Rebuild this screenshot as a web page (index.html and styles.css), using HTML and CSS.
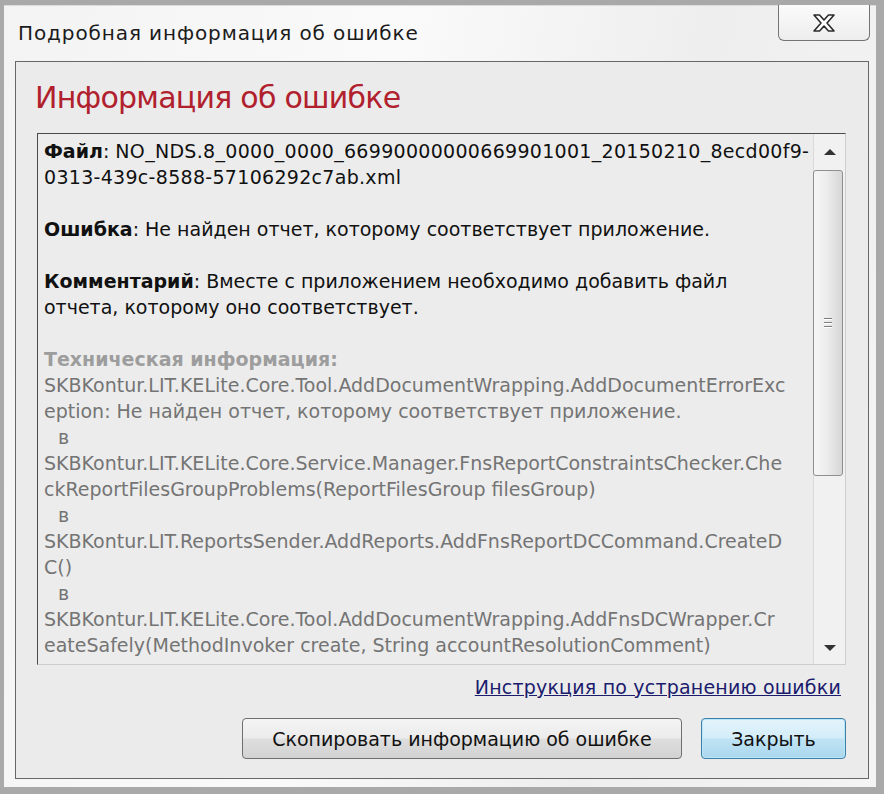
FILE: index.html
```html
<!DOCTYPE html>
<html lang="ru">
   <head>
      <meta charset="utf-8">
      <title>Подробная информация об ошибке</title>
      <link rel="stylesheet" href="styles.css">
   </head>
   <body>
      <div class="window">
      	<div class="titlebar">
      		<span class="title">Подробная информация об ошибке</span>
      		<button class="close" type="button" aria-label="Закрыть">
      			<svg width="24" height="20" viewBox="0 0 24 20">
      				<polygon points="2,2 7.5,2 12,7 16.5,2 22,2 15,10 22,18 16.5,18 12,13 7.5,18 2,18 9,10" fill="#fff" stroke="#2b2b2b" stroke-width="1.6" stroke-linejoin="round"/>
      			</svg>
      		</button>
      	</div>

      	<div class="client">
      		<h1 class="heading">Информация об ошибке</h1>

      		<div class="details">
      			<div class="details-text">
      				<p><b>Файл</b>: <span class="file">NO_NDS.8_0000_0000_66990000000669901001_20150210_8ecd00f9-</span><br><span class="file">0313-439c-8588-57106292c7ab.xml</span></p>
      				<p><b>Ошибка</b>: Не найден отчет, которому соответствует приложение.</p>
      				<p><b>Комментарий</b>: Вместе с приложением необходимо добавить файл<br>отчета, которому оно соответствует.</p>
      				<div class="tech">
      					<b>Техническая информация:</b><br>
      					SKBKontur.LIT.KELite.Core.Tool.AddDocumentWrapping.AddDocumentErrorExc<br>
      					eption: Не найден отчет, которому соответствует приложение.<br>
      					<span class="at">в</span><br>
      					SKBKontur.LIT.KELite.Core.Service.Manager.FnsReportConstraintsChecker.Che<br>
      					ckReportFilesGroupProblems(ReportFilesGroup filesGroup)<br>
      					<span class="at">в</span><br>
      					SKBKontur.LIT.ReportsSender.AddReports.AddFnsReportDCCommand.CreateD<br>
      					C()<br>
      					<span class="at">в</span><br>
      					SKBKontur.LIT.KELite.Core.Tool.AddDocumentWrapping.AddFnsDCWrapper.Cr<br>
      					eateSafely(MethodInvoker create, String accountResolutionComment)
      				</div>
      			</div>

      			<div class="scrollbar">
      				<div class="arrow up"></div>
      				<div class="track">
      					<div class="thumb"><span></span><span></span><span></span></div>
      				</div>
      				<div class="arrow down"></div>
      			</div>
      		</div>

      		<div class="help">
      			<a href="#">Инструкция по устранению ошибки</a>
      		</div>

      		<div class="actions">
      			<button class="btn copy" type="button">Скопировать информацию об ошибке</button>
      			<button class="btn default" type="button">Закрыть</button>
      		</div>
      	</div>
      </div>
   </body>
</html>
```

FILE: styles.css
```css
*{
	box-sizing:border-box;
}
body{
	margin:0;
	padding:5px 8px 7px 4px;
	height:794px;
	background:#a9a9a9;
	font-family:"DejaVu Sans", sans-serif;
	overflow:hidden;
}
.window{
	height:100%;
	display:flex;
	flex-direction:column;
	padding:0 7px 8px 11px;
	background:linear-gradient(100deg, #f3f3f3 0%, #fafafa 40%, #eeeeee 70%, #f4f4f4 100%);
	border-top:1px solid #dcdcdc;
}
.titlebar{
	height:55px;
	display:flex;
	justify-content:space-between;
	align-items:flex-start;
	flex-shrink:0;
}
.title{
	padding:15px 0 0 3px;
	font-size:20px;
	line-height:24px;
	color:#1b1b1b;
	letter-spacing:0.9px;
}
.close{
	width:92px;
	height:36px;
	margin:-1px -1px 0 0;
	padding:0;
	display:flex;
	align-items:center;
	justify-content:center;
	border:1px solid #747474;
	border-top:none;
	border-radius:0 0 6px 6px;
	background:linear-gradient(#fbfbfb, #ededed);
}
.client{
	flex:1;
	display:flex;
	flex-direction:column;
	padding:0 22px 0 21px;
	border:1px solid #676767;
	background:#ebebeb;
}
.heading{
	margin:0 0 17px -2px;
	padding-top:18px;
	font-size:30px;
	line-height:36px;
	font-weight:normal;
	color:#b1202d;
	letter-spacing:-0.75px;
}
.details{
	height:532px;
	display:flex;
	border-top:1px solid #4a4a4a;
	border-left:1px solid #4a4a4a;
	border-right:1px solid #cdcdcd;
	border-bottom:1px solid #cdcdcd;
	background:#ececec;
}
.details-text{
	flex:1;
	padding:4px 0 0 6px;
	overflow:hidden;
	white-space:nowrap;
	font-size:19px;
	line-height:26px;
	color:#111;
}
.details-text p{
	margin:0 0 26px;
}
.details-text b{
	font-weight:bold;
}
.file{
	letter-spacing:0.3px;
}
.tech{
	color:#747474;
}
.tech b{
	color:#9d9d9d;
}
.at{
	padding-left:14px;
}
.scrollbar{
	width:32px;
	display:flex;
	flex-direction:column;
	border-left:1px solid #dadada;
	background:#f1f1f1;
}
.arrow{
	height:36px;
	display:flex;
	align-items:center;
	justify-content:center;
}
.arrow:after{
	content:'';
	border-left:6px solid transparent;
	border-right:6px solid transparent;
}
.up:after{
	border-bottom:6px solid #333;
}
.down{
	height:32px;
}
.down:after{
	border-top:6px solid #333;
}
.track{
	flex:1;
}
.thumb{
	width:30px;
	height:306px;
	display:flex;
	flex-direction:column;
	align-items:center;
	justify-content:center;
	gap:2px;
	border:1px solid #8f8f8f;
	border-radius:3px;
	background:linear-gradient(90deg, #f7f7f7 0%, #ededed 45%, #d6d6d6 100%);
	margin-left:-1px;
}
.thumb span{
	width:8px;
	height:2px;
	background:#7d7d7d;
	border-bottom:1px solid #fff;
}
.help{
	padding:10px 5px 0 0;
	text-align:right;
	line-height:24px;
}
.help a{
	font-size:19px;
	color:#1c1c6e;
	text-decoration:underline;
	letter-spacing:0.2px;
}
.actions{
	display:flex;
	justify-content:flex-end;
	gap:19px;
	margin-top:17px;
}
.btn{
	height:41px;
	padding:0;
	font-family:"DejaVu Sans", sans-serif;
	font-size:19px;
	color:#111;
	border-radius:4px;
}
.copy{
	width:440px;
	border:1px solid #6f6f6f;
	background:linear-gradient(#f4f4f4 0%, #ececec 48%, #dedede 52%, #d2d2d2 100%);
}
.default{
	width:145px;
	border:1px solid #3d7fa6;
	background:linear-gradient(#e4f4fb 0%, #d3edf9 48%, #bfe3f4 52%, #aad7ee 100%);
	box-shadow:inset 0 0 0 1px #b9e6fb;
}
```
